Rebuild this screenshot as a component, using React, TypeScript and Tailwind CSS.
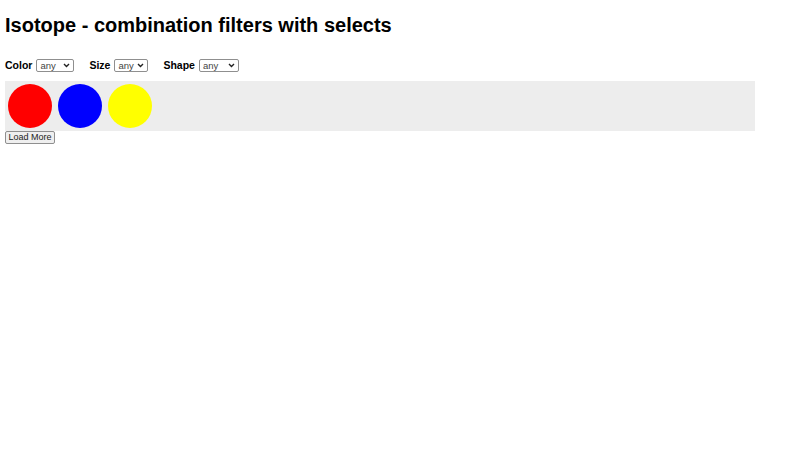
const filters = [
  { label: 'Color', width: 'w-[38px]' },
  { label: 'Size', width: 'w-[34px]' },
  { label: 'Shape', width: 'w-[40px]' },
];

const items = ['bg-[#ff0000]', 'bg-[#0000ff]', 'bg-[#ffff00]'];

function Chevron() {
  return (
    <svg className="pointer-events-none absolute right-[4px] top-[4px] h-[5px] w-[7px]" viewBox="0 0 7 5" fill="none">
      <path d="M1 1l2.5 2.5L6 1" stroke="#222" strokeWidth="1.4" />
    </svg>
  );
}

export default function App() {
  return (
    <div className="min-h-[450px] bg-white p-[5px] text-black" style={{ fontFamily: '"Liberation Sans", Arial, sans-serif' }}>
      <h1 className="mt-[8px] text-[20px] font-bold leading-[24px]">Isotope - combination filters with selects</h1>

      <div className="mt-[22px] flex items-center gap-[15px]">
        {filters.map((f) => (
          <div key={f.label} className="flex items-center gap-[4px]">
            <span className="text-[10.5px] font-bold leading-[13px]">{f.label}</span>
            <div className={`relative ${f.width} h-[13px]`}>
              <select className="block h-[13px] w-full appearance-none rounded-[2px] border border-[#8f8f8f] bg-white py-0 pl-[3px] text-[9.5px] leading-[11px] text-[#444]">
                <option>any</option>
              </select>
              <Chevron />
            </div>
          </div>
        ))}
      </div>

      <div className="mt-[9px] flex h-[50px] w-[750px] bg-[#ededed]">
        {items.map((c) => (
          <div key={c} className="h-[50px] w-[50px] p-[3px]">
            <div className={`h-[44px] w-[44px] rounded-full ${c}`} />
          </div>
        ))}
      </div>

      <button className="flex h-[13px] w-[50px] items-center justify-center rounded-[2px] border border-[#8f8f8f] bg-[#efefef] text-[9px] leading-none text-[#222]">
        Load More
      </button>
    </div>
  );
}
